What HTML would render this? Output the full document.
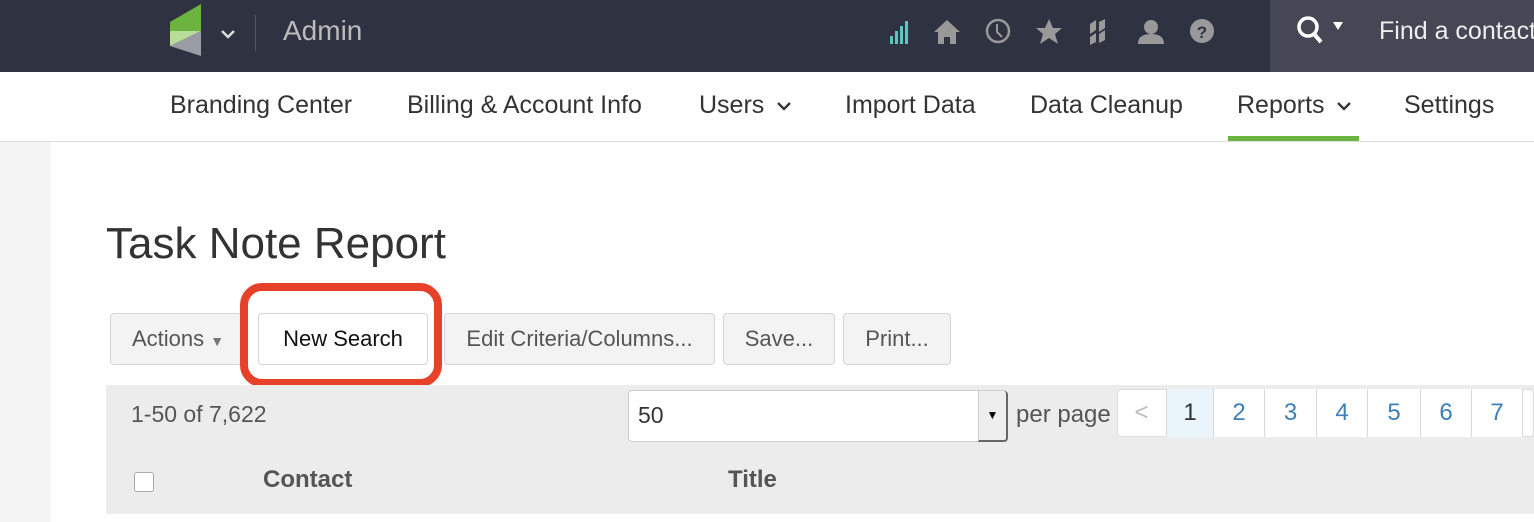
<!DOCTYPE html>
<html><head><style>
*{margin:0;padding:0;box-sizing:border-box}
body{width:1534px;height:522px;overflow:hidden;background:#fff;font-family:"Liberation Sans",sans-serif;position:relative}
.a{position:absolute}
.hdr{left:0;top:0;width:1534px;height:72px;background:#2f3241}
.nav{top:72px;left:0;width:1534px;height:70px;border-bottom:1px solid #ddd;background:#fff}
.nav span{position:absolute;top:19px;font-size:25px;color:#333;white-space:nowrap}
.btn{position:absolute;top:313px;height:52px;border:1px solid #d4d4d4;border-radius:4px;background:#f3f3f3;font-size:22px;color:#555;line-height:50px;text-align:center;white-space:nowrap}
.pg{position:absolute;top:389px;height:48px;background:#fff;border-right:1px solid #d8d8d8;font-size:24px;color:#3d7fb8;text-align:center;line-height:48px}
</style></head><body>
<div class="a hdr"></div>
<svg class="a" style="left:168px;top:2px" width="36" height="56" viewBox="0 0 36 56"><polygon points="2,20 33,2 33,29 2,29" fill="#6cb33f"/><polygon points="2,29 33,29 2,44" fill="#b9dc98"/><polygon points="2,44 33,29 33,54" fill="#9a9ca3"/></svg>
<svg class="a" style="left:220px;top:28px" width="16" height="12"><path d="M2 3 L8 9 L14 3" stroke="#ddd" stroke-width="2.5" fill="none"/></svg>
<div class="a" style="left:255px;top:15px;width:1px;height:36px;background:#555"></div>
<div class="a" style="left:283px;top:15px;font-size:28px;color:#bbb">Admin</div>
<svg class="a" style="left:888px;top:18px" width="330" height="28">
<g fill="#5cc7c2"><rect x="2" y="18" width="3" height="8"/><rect x="7" y="13" width="3" height="13"/><rect x="12" y="8" width="3" height="18"/><rect x="17" y="3" width="3" height="23"/></g>
<g fill="#999"><path d="M46 14 L59 2 L72 14 L68 14 L68 26 L62 26 L62 19 L56 19 L56 26 L50 26 L50 14Z"/>
<circle cx="110" cy="13" r="11" fill="none" stroke="#999" stroke-width="2.5"/><path d="M109 6 L109 14 L114 19" stroke="#999" stroke-width="2" fill="none"/>
<path d="M161 1 L165 10 L174 10 L167 16 L170 26 L161 20 L152 26 L155 16 L148 10 L157 10Z"/>
<path d="M202 6 L208 2 L208 12 L202 16Z M211 4 L217 1 L217 10 L211 14Z M202 19 L208 15 L208 24 L202 27Z M211 16 L217 12 L217 22 L211 25Z"/>
<circle cx="263" cy="9" r="7"/><path d="M250 26 Q250 16 263 16 Q276 16 276 26Z"/>
<circle cx="314" cy="13" r="12"/></g>
<text x="314" y="20" font-size="17" font-weight="bold" fill="#2f3241" text-anchor="middle" font-family="Liberation Sans">?</text></svg>
<div class="a" style="left:1270px;top:0;width:264px;height:72px;background:#454754"></div>
<svg class="a" style="left:1296px;top:15px" width="56" height="32"><circle cx="12" cy="12" r="9" stroke="#fff" stroke-width="3.5" fill="none"/><path d="M18 19 L25 27" stroke="#fff" stroke-width="4"/><path d="M37 7 L47 7 L42 15Z" fill="#fff"/></svg>
<div class="a" style="left:1379px;top:17px;font-size:25px;color:#eee;white-space:nowrap">Find a contact</div>
<div class="a nav">
<span style="left:170px">Branding Center</span>
<span style="left:407px">Billing &amp; Account Info</span>
<span style="left:699px">Users</span>
<svg class="a" style="left:777px;top:29px" width="14" height="10"><path d="M1 2 L7 8 L13 2" stroke="#333" stroke-width="2.3" fill="none"/></svg>
<span style="left:845px">Import Data</span>
<span style="left:1030px">Data Cleanup</span>
<span style="left:1237px">Reports</span>
<svg class="a" style="left:1337px;top:29px" width="14" height="10"><path d="M1 2 L7 8 L13 2" stroke="#333" stroke-width="2.3" fill="none"/></svg>
<div class="a" style="left:1228px;top:64px;width:131px;height:5px;background:#6cb33f"></div>
<span style="left:1404px">Settings</span>
</div>
<div class="a" style="left:0;top:142px;width:51px;height:380px;background:#f4f4f4"></div>
<div class="a" style="left:106px;top:219px;font-size:44px;color:#333;white-space:nowrap">Task Note Report</div>
<div class="btn" style="left:110px;width:132px;text-align:left;padding-left:21px">Actions <span style="font-size:14px;color:#777">▼</span></div>
<div class="btn" style="left:258px;width:170px;background:#fff;color:#111">New Search</div>
<div class="btn" style="left:444px;width:271px">Edit Criteria/Columns...</div>
<div class="btn" style="left:723px;width:112px">Save...</div>
<div class="btn" style="left:843px;width:108px">Print...</div>
<div class="a" style="left:240px;top:283px;width:202px;height:104px;border:8px solid #e8412a;border-radius:22px"></div>
<div class="a" style="left:106px;top:385px;width:1428px;height:129px;background:#ececec"></div>
<div class="a" style="left:131px;top:401px;font-size:23px;color:#555">1-50 of 7,622</div>
<div class="a" style="left:628px;top:390px;width:380px;height:52px;background:#fff;border:1px solid #ccc;border-radius:4px;font-size:23px;color:#333;padding:11px 0 0 9px">50</div>
<div class="a" style="left:978px;top:391px;width:30px;height:51px;background:#eee;border-left:1px solid #ccc;border-right:2px solid #666;border-bottom:2px solid #666;border-radius:0 4px 4px 0;font-size:12px;text-align:center;line-height:48px">▼</div>
<div class="a" style="left:1016px;top:401px;font-size:24px;color:#555;white-space:nowrap">per page</div>
<div class="a" style="left:1117px;top:389px;width:417px;height:48px;background:#fff;border:1px solid #ddd;border-radius:4px"></div>
<div class="pg" style="left:1117px;width:50px;color:#bbb;background:transparent">&lt;</div>
<div class="pg" style="left:1167px;width:47px;color:#333;background:#eaf4fb">1</div>
<div class="pg" style="left:1214px;width:51px">2</div>
<div class="pg" style="left:1265px;width:52px">3</div>
<div class="pg" style="left:1317px;width:51px">4</div>
<div class="pg" style="left:1368px;width:53px">5</div>
<div class="pg" style="left:1421px;width:51px">6</div>
<div class="pg" style="left:1472px;width:51px">7</div>
<div class="a" style="left:134px;top:472px;width:20px;height:20px;border:1px solid #aaa;border-radius:3px;background:#fff"></div>
<div class="a" style="left:263px;top:466px;font-size:24px;font-weight:bold;color:#555">Contact</div>
<div class="a" style="left:728px;top:466px;font-size:24px;font-weight:bold;color:#555">Title</div>
</body></html>
